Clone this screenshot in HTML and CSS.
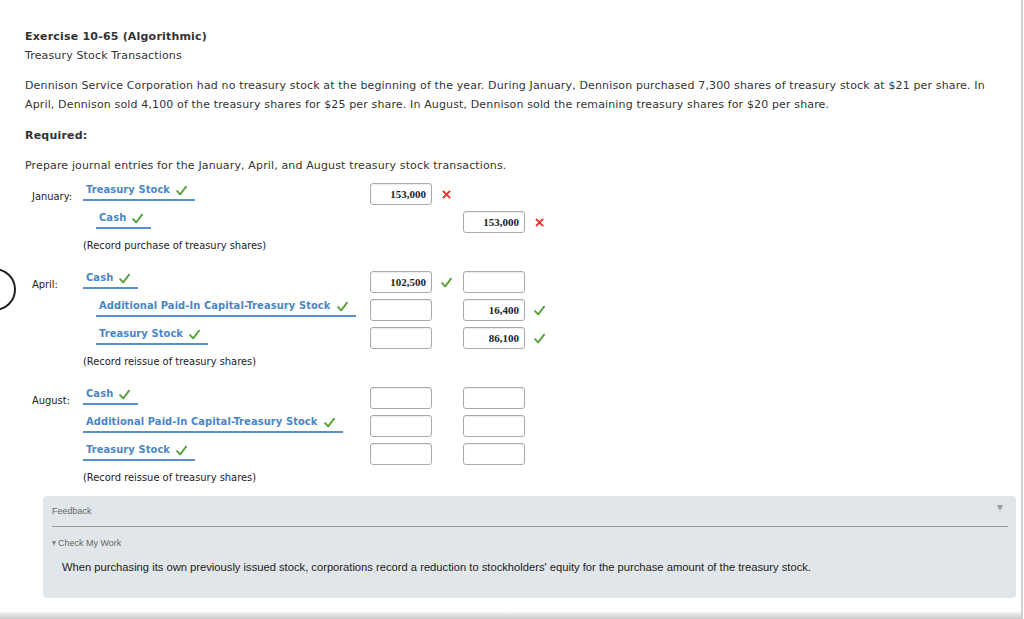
FILE: index.html
```html
<!DOCTYPE html>
<html>
<head>
<meta charset="utf-8">
<link rel="stylesheet" href="styles.css">
</head>
<body>
<div class="page">
  <div class="ring"></div>
  <div class="content">
    <h1 class="title">Exercise 10-65 (Algorithmic)</h1>
    <div class="subtitle">Treasury Stock Transactions</div>
    <p class="para">Dennison Service Corporation had no treasury stock at the beginning of the year. During January, Dennison purchased 7,300 shares of treasury stock at $21 per share. In April, Dennison sold 4,100 of the treasury shares for $25 per share. In August, Dennison sold the remaining treasury shares for $20 per share.</p>
    <div class="req">Required:</div>
    <p class="prep">Prepare journal entries for the January, April, and August treasury stock transactions.</p>

    <div class="journal">
      <!-- January -->
      <div class="group">
        <div class="row">
          <div class="lbl">January:</div>
          <div class="acct"><span class="acc">Treasury Stock<svg class="ck" viewBox="0 0 12 12"><path d="M1.2 6.6 L4.6 10.2 L11 1.8"/></svg></span></div>
          <div class="cell"><span class="inp">153,000</span><svg class="xx" viewBox="0 0 10 10"><path d="M1 1 L9 9 M9 1 L1 9"/></svg></div>
          <div class="cell"></div>
        </div>
        <div class="row">
          <div class="lbl"></div>
          <div class="acct cr"><span class="acc">Cash<svg class="ck" viewBox="0 0 12 12"><path d="M1.2 6.6 L4.6 10.2 L11 1.8"/></svg></span></div>
          <div class="cell"></div>
          <div class="cell"><span class="inp">153,000</span><svg class="xx" viewBox="0 0 10 10"><path d="M1 1 L9 9 M9 1 L1 9"/></svg></div>
        </div>
        <div class="note">(Record purchase of treasury shares)</div>
      </div>

      <!-- April -->
      <div class="group">
        <div class="row">
          <div class="lbl">April:</div>
          <div class="acct"><span class="acc">Cash<svg class="ck" viewBox="0 0 12 12"><path d="M1.2 6.6 L4.6 10.2 L11 1.8"/></svg></span></div>
          <div class="cell"><span class="inp">102,500</span><svg class="ok" viewBox="0 0 12 12"><path d="M1.2 6.6 L4.6 10.2 L11 1.8"/></svg></div>
          <div class="cell"><span class="inp"></span></div>
        </div>
        <div class="row">
          <div class="lbl"></div>
          <div class="acct cr"><span class="acc">Additional Paid-In Capital-Treasury Stock<svg class="ck" viewBox="0 0 12 12"><path d="M1.2 6.6 L4.6 10.2 L11 1.8"/></svg></span></div>
          <div class="cell"><span class="inp"></span></div>
          <div class="cell"><span class="inp">16,400</span><svg class="ok" viewBox="0 0 12 12"><path d="M1.2 6.6 L4.6 10.2 L11 1.8"/></svg></div>
        </div>
        <div class="row">
          <div class="lbl"></div>
          <div class="acct cr"><span class="acc">Treasury Stock<svg class="ck" viewBox="0 0 12 12"><path d="M1.2 6.6 L4.6 10.2 L11 1.8"/></svg></span></div>
          <div class="cell"><span class="inp"></span></div>
          <div class="cell"><span class="inp">86,100</span><svg class="ok" viewBox="0 0 12 12"><path d="M1.2 6.6 L4.6 10.2 L11 1.8"/></svg></div>
        </div>
        <div class="note">(Record reissue of treasury shares)</div>
      </div>

      <!-- August -->
      <div class="group">
        <div class="row">
          <div class="lbl">August:</div>
          <div class="acct"><span class="acc">Cash<svg class="ck" viewBox="0 0 12 12"><path d="M1.2 6.6 L4.6 10.2 L11 1.8"/></svg></span></div>
          <div class="cell"><span class="inp"></span></div>
          <div class="cell"><span class="inp"></span></div>
        </div>
        <div class="row">
          <div class="lbl"></div>
          <div class="acct"><span class="acc">Additional Paid-In Capital-Treasury Stock<svg class="ck" viewBox="0 0 12 12"><path d="M1.2 6.6 L4.6 10.2 L11 1.8"/></svg></span></div>
          <div class="cell"><span class="inp"></span></div>
          <div class="cell"><span class="inp"></span></div>
        </div>
        <div class="row">
          <div class="lbl"></div>
          <div class="acct"><span class="acc">Treasury Stock<svg class="ck" viewBox="0 0 12 12"><path d="M1.2 6.6 L4.6 10.2 L11 1.8"/></svg></span></div>
          <div class="cell"><span class="inp"></span></div>
          <div class="cell"><span class="inp"></span></div>
        </div>
        <div class="note">(Record reissue of treasury shares)</div>
      </div>
    </div>

    <div class="feedback">
      <div class="fb-head">
        <span>Feedback</span>
        <span class="tri tri-big"></span>
      </div>
      <div class="fb-check"><span class="tri tri-small"></span>Check My Work</div>
      <div class="fb-text">When purchasing its own previously issued stock, corporations record a reduction to stockholders' equity for the purchase amount of the treasury stock.</div>
    </div>
  </div>
  <div class="bottom"></div>
</div>
</body>
</html>
```

FILE: styles.css
```css
* { box-sizing: border-box; }
html, body { margin: 0; padding: 0; background: #fff; }
body {
  font-family: "DejaVu Sans", Verdana, sans-serif;
  font-size: 11px;
  color: #333;
  overflow: hidden;
}
.page {
  position: relative;
  width: 1023px;
  height: 619px;
  border-right: 2px solid #d0d0d0;
}
.ring {
  position: absolute;
  left: -27px;
  top: 268px;
  width: 43px;
  height: 43px;
  border: 2px solid #222;
  border-radius: 50%;
}
.content {
  padding: 27px 0 0 25px;
}
.title {
  margin: 0;
  font-size: 11px;
  font-weight: bold;
  line-height: 19px;
  color: #333;
  letter-spacing: 0.2px;
}
.subtitle { line-height: 19px; letter-spacing: 0.15px; }
.para {
  margin: 11px 0 0;
  line-height: 19px;
  width: 975px;
  letter-spacing: 0.14px;
}
.req {
  margin-top: 12px;
  font-weight: bold;
  line-height: 19px;
  letter-spacing: 0.2px;
}
.prep {
  margin: 11px 0 0;
  line-height: 19px;
  letter-spacing: 0.14px;
}
.journal {
  margin-top: 5px;
  padding-left: 7px;
}
.group { margin-bottom: 13px; }
.group:last-child { margin-bottom: 0; }
.row {
  display: flex;
  align-items: center;
  height: 28px;
}
.lbl {
  width: 51px;
  font-family: "DejaVu Sans Condensed", Tahoma, sans-serif;
  font-size: 11px;
  color: #222;
  padding-top: 5px;
}
.acct {
  width: 287px;
  display: flex;
  white-space: nowrap;
}
.acct.cr { padding-left: 13px; }
.acc {
  display: inline-flex;
  align-items: center;
  padding: 0 8px 2px 3px;
  border-bottom: 2px solid #5b8fc9;
  color: #4a86c4;
  font-family: "DejaVu Sans Condensed", Tahoma, sans-serif;
  font-weight: bold;
  font-size: 11px;
  line-height: 14px;
  margin-bottom: 4px;
  letter-spacing: 0.1px;
}
.ck, .ok {
  width: 11px;
  height: 11px;
  margin-left: 6px;
  fill: none;
  stroke: #56a03a;
  stroke-width: 2;
  stroke-linecap: round;
  stroke-linejoin: round;
}
.ok { margin-left: 9px; }
.xx {
  width: 9px;
  height: 9px;
  margin-left: 10px;
  fill: none;
  stroke: #e8342c;
  stroke-width: 2.2;
}
.cell {
  width: 93px;
  display: flex;
  align-items: center;
}
.inp {
  display: inline-block;
  width: 62px;
  height: 22px;
  border: 1px solid #aaa;
  border-radius: 3px;
  box-shadow: inset 0 1px 1px rgba(0,0,0,0.08);
  font-family: "Liberation Serif", "Times New Roman", serif;
  font-weight: bold;
  font-size: 11px;
  color: #222;
  text-align: right;
  padding-right: 5px;
  line-height: 20px;
}
.note {
  height: 19px;
  line-height: 19px;
  padding-left: 51px;
  font-family: "DejaVu Sans Condensed", Tahoma, sans-serif;
  font-size: 11px;
  color: #222;
}
.feedback {
  margin: 9px 0 0 18px;
  width: 973px;
  height: 102px;
  background: #e0e6e9;
  border-radius: 4px;
  padding: 0 8px 0 9px;
  font-family: "Liberation Sans", Arial, sans-serif;
}
.fb-head {
  display: flex;
  justify-content: space-between;
  align-items: center;
  height: 31px;
  border-bottom: 1px solid #9a9a9a;
  font-size: 9px;
  color: #666;
}
.tri {
  display: inline-block;
  width: 0;
  height: 0;
  border-left: 3.5px solid transparent;
  border-right: 3.5px solid transparent;
  border-top: 6px solid #9a9a9a;
}
.tri-big { margin-right: 5px; margin-top: -7px; }
.fb-check {
  margin-top: 10px;
  font-size: 9px;
  color: #666;
  line-height: 12px;
}
.tri-small {
  border-left-width: 2.5px;
  border-right-width: 2.5px;
  border-top-width: 5px;
  border-top-color: #888;
  margin-right: 2px;
  vertical-align: 0;
}
.fb-text {
  margin-top: 11px;
  padding-left: 10px;
  font-size: 11.2px;
  color: #222;
  line-height: 14px;
}
.bottom {
  position: absolute;
  left: 0;
  right: 0;
  bottom: 0;
  height: 7px;
  background: linear-gradient(#f4f4f4, #c9c9c9);
}
```
